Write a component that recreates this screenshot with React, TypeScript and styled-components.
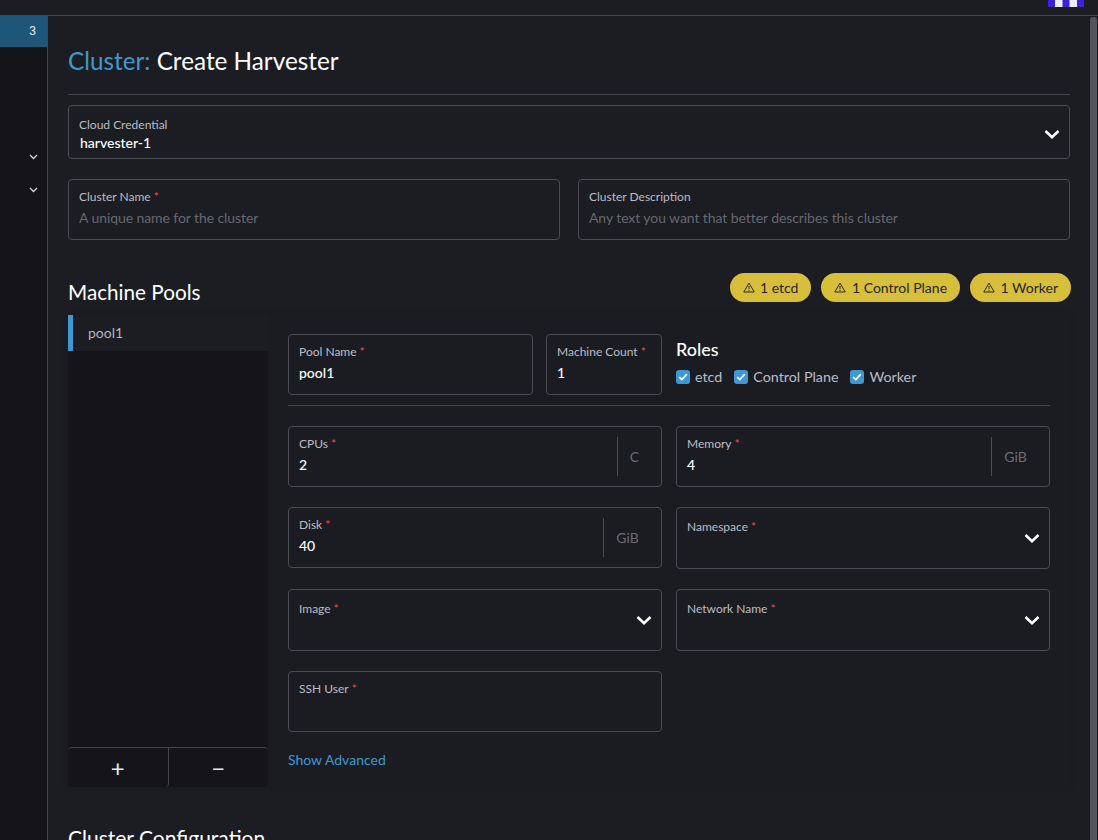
import React from "react";
import styled, { createGlobalStyle } from "styled-components";

const Global = createGlobalStyle`
  html, body { margin: 0; padding: 0; height: 840px; overflow: hidden; background: #1b1d22; }
  body { font-family: Lato, "Open Sans", sans-serif; color: #fff; }
  * { box-sizing: border-box; }
`;

const Page = styled.div`
  width: 1098px; height: 840px; display: flex; flex-direction: column; overflow: hidden; background: #1b1d22;
`;
const Header = styled.header`
  height: 16px; flex: none; display: flex; justify-content: flex-end; align-items: flex-start;
  padding-right: 14px; border-bottom: 1px solid #45464d; background: #1b1d22;
`;
const Avatar = styled.svg`width: 36px; height: 7px; display: block;`;
const Body = styled.div`flex: 1; display: flex; min-height: 0;`;
const Sidebar = styled.nav`
  width: 48px; flex: none; background: #141419; border-right: 1px solid #45464d;
  display: flex; flex-direction: column;
`;
const ActiveItem = styled.div`
  height: 31px; background: #1d5679; color: #e8edf2; font: 12px/31px "Liberation Sans", sans-serif;
  text-align: right; padding-right: 11px;
`;
const SideChevrons = styled.div`
  display: flex; flex-direction: column; align-items: flex-end; gap: 27px; padding: 107px 9px 0 0;
`;
const Main = styled.main`flex: 1; min-width: 0; padding: 0 20px; overflow: hidden;`;
const Scrollbar = styled.div`
  width: 8px; flex: none; padding: 1px 1px 0 0; display: flex;
`;
const Thumb = styled.div`flex: 1; background: #53545c; border-radius: 3px 3px 0 0;`;

const Title = styled.h1`
  margin: 0; height: 79px; padding-top: 28px; font-size: 24.3px; line-height: 34px; font-weight: 400;
  border-bottom: 1px solid #45464d; color: #fff;
`;
const TitleLink = styled.span`color: #3d98d3;`;

const Box = styled.div<{ $h: number; $top?: number }>`
  position: relative; height: ${p => p.$h}px; border: 1px solid #4b4c53; border-radius: 4px;
  padding: ${p => p.$top ?? 10}px 10px 0; display: flex; flex-direction: column; min-width: 0;
  background: transparent;
`;
const Label = styled.label`
  font-size: 12px; line-height: 14px; color: #bcbcc4; display: block;
`;
const Req = styled.span`color: #f64747; margin-left: 3px; font-size: 12px; line-height: 12px; position: relative; top: 0;`;
const Value = styled.div<{ $indent?: number; $gap?: number }>`
  font-size: 14px; line-height: 20px; margin-top: ${p => p.$gap ?? 4}px; color: #fff; font-weight: 500;
  padding-left: ${p => p.$indent ?? 0}px;
`;
const Placeholder = styled.div`
  font-size: 14px; line-height: 20px; margin-top: 4px; color: #66676f; letter-spacing: -0.08px;
`;
const Addon = styled.div<{ $w: number }>`
  position: absolute; right: 0; top: 10px; height: 39px; width: ${p => p.$w}px; border-left: 1px solid #4b4c53;
  display: flex; align-items: center; justify-content: center; color: #6b6c74; font-size: 14px; padding-right: 10px;
`;
const Chevron = styled.svg<{ $dy?: number }>`
  position: absolute; right: 9px; top: 50%; margin-top: ${p => -6 + (p.$dy ?? 0)}px; width: 16px; height: 12px;
`;

const Credential = styled.div`margin-top: 10px;`;
const TwoUp = styled.div`display: grid; grid-template-columns: 492px 492px; gap: 18px; margin-top: 20px;`;

const PoolsHead = styled.div`
  height: 75px; display: flex; align-items: flex-start; justify-content: space-between; padding-top: 33px;
`;
const H2 = styled.h2`margin: 5px 0 0; font-size: 20.7px; line-height: 28px; font-weight: 400; color: #fff;`;
const Badges = styled.div`display: flex; gap: 10px; margin-right: -1px;`;
const Badge = styled.div`
  height: 29px; padding: 0 13px 0 13px; border-radius: 15px; background: #d8bf3b; color: #26262a; display: flex;
  align-items: center; gap: 5.5px; font-size: 14px;
`;

const Pools = styled.section`display: flex; height: 472px; background: #1b1c21; box-shadow: 0 0 6px rgba(0,0,0,.12);`;
const Tabs = styled.div`
  width: 200px; flex: none; background: #141419; display: flex; flex-direction: column;
  border-radius: 0 0 4px 4px; overflow: hidden;
`;
const Tab = styled.div`
  height: 36px; background: #1b1d22; border-left: 5px solid #3d98d3; padding-left: 15px; line-height: 36px;
  color: #b4b4bc; font-size: 14px;
`;
const TabSpace = styled.div`flex: 1;`;
const TabButtons = styled.div`display: flex; height: 40px; border-top: 1px solid #45464d; border-radius: 4px 4px 0 0;`;
const TabBtn = styled.div<{ $first?: boolean }>`
  flex: 1; display: flex; align-items: center; justify-content: center; color: #e8e8ec; font-size: 24px; line-height: 38px;
  border-right: ${p => (p.$first ? "1px solid #45464d" : "none")};
  border-radius: 0 0 4px 0;
`;
const Form = styled.div`flex: 1; min-width: 0; padding: 19px 20px 0;`;
const TopRow = styled.div`display: grid; grid-template-columns: 245px 116px 1fr; column-gap: 13px;`;
const Roles = styled.div`padding-left: 1px;`;
const RolesTitle = styled.div`font-size: 18px; line-height: 24px; margin-top: 3px; color: #fff; font-weight: 500;`;
const Checks = styled.div`display: flex; gap: 12px; margin-top: 6px;`;
const Check = styled.div`display: flex; align-items: center; gap: 5px; font-size: 14.3px; line-height: 20px; color: #bcbcc4;`;
const Tick = styled.span`
  width: 14px; height: 14px; border-radius: 3px; background: #3d98d3; display: inline-flex; align-items: center; justify-content: center;
`;
const Rule = styled.hr`border: 0; border-top: 1px solid #45464d; margin: 10px 0 20px;`;
const Grid = styled.div`display: grid; grid-template-columns: 374px 374px; column-gap: 14px; row-gap: 20px;`;
const AdvLink = styled.a`display: block; margin-top: 19px; font-size: 14px; line-height: 18px; color: #3d98d3;`;
const ConfigHead = styled.h2`margin: 37px 0 0; font-size: 21px; line-height: 28px; font-weight: 400; color: #fff;`;

const SelectChevron = ({ dy }: { dy?: number }) => (
  <Chevron viewBox="0 0 16 12" fill="none" $dy={dy}>
    <path d="M1.5 3 8 9.2 14.5 3" stroke="#fff" strokeWidth="2.6" />
  </Chevron>
);
const SmallChevron = () => (
  <svg width="9" height="6" viewBox="0 0 9 6" fill="none">
    <path d="M1 1 4.5 4.5 8 1" stroke="#d8d8dc" strokeWidth="1.3" />
  </svg>
);
const Warn = () => (
  <svg width="12" height="11" viewBox="0 0 12 11" fill="none" stroke="#2b2a22" strokeWidth="1">
    <path d="M6 1 11.2 10H.8Z" strokeLinejoin="round" />
    <path d="M6 4v3.2M6 8v.9" />
  </svg>
);
const Role = ({ children }: { children: string }) => (
  <Check>
    <Tick>
      <svg width="10" height="8" viewBox="0 0 10 8" fill="none">
        <path d="M1.2 4.2 3.8 6.6 8.8 1.2" stroke="#fff" strokeWidth="1.7" />
      </svg>
    </Tick>
    {children}
  </Check>
);
const Field = ({ label, req = true }: { label: string; req?: boolean }) => (
  <Label>
    {label}
    {req && <Req>*</Req>}
  </Label>
);

export default function App() {
  return (
    <Page>
      <Global />
      <Header>
        <Avatar viewBox="0 0 36 7">
          <rect width="36" height="7" fill="#3b22d8" />
          <rect x="7" width="7.5" height="7" fill="#ecebf8" />
          <rect x="21.5" width="7.5" height="7" fill="#ecebf8" />
        </Avatar>
      </Header>
      <Body>
        <Sidebar>
          <ActiveItem>3</ActiveItem>
          <SideChevrons>
            <SmallChevron />
            <SmallChevron />
          </SideChevrons>
        </Sidebar>
        <Main>
          <Title>
            <TitleLink>Cluster:</TitleLink> Create Harvester
          </Title>
          <Credential>
            <Box $h={54} $top={12}>
              <Field label="Cloud Credential" req={false} />
              <Value $indent={1} $gap={1}>harvester-1</Value>
              <SelectChevron dy={2} />
            </Box>
          </Credential>
          <TwoUp>
            <Box $h={61}>
              <Field label="Cluster Name" />
              <Placeholder>A unique name for the cluster</Placeholder>
            </Box>
            <Box $h={61}>
              <Field label="Cluster Description" req={false} />
              <Placeholder>Any text you want that better describes this cluster</Placeholder>
            </Box>
          </TwoUp>
          <PoolsHead>
            <H2>Machine Pools</H2>
            <Badges>
              <Badge><Warn />1 etcd</Badge>
              <Badge><Warn />1 Control Plane</Badge>
              <Badge><Warn />1 Worker</Badge>
            </Badges>
          </PoolsHead>
          <Pools>
            <Tabs>
              <Tab>pool1</Tab>
              <TabSpace />
              <TabButtons>
                <TabBtn $first>+</TabBtn>
                <TabBtn>−</TabBtn>
              </TabButtons>
            </Tabs>
            <Form>
              <TopRow>
                <Box $h={61}>
                  <Field label="Pool Name" />
                  <Value>pool1</Value>
                </Box>
                <Box $h={61}>
                  <Field label="Machine Count" />
                  <Value>1</Value>
                </Box>
                <Roles>
                  <RolesTitle>Roles</RolesTitle>
                  <Checks>
                    <Role>etcd</Role>
                    <Role>Control Plane</Role>
                    <Role>Worker</Role>
                  </Checks>
                </Roles>
              </TopRow>
              <Rule />
              <Grid>
                <Box $h={61}>
                  <Field label="CPUs" />
                  <Value>2</Value>
                  <Addon $w={44}>C</Addon>
                </Box>
                <Box $h={61}>
                  <Field label="Memory" />
                  <Value>4</Value>
                  <Addon $w={58}>GiB</Addon>
                </Box>
                <Box $h={61}>
                  <Field label="Disk" />
                  <Value>40</Value>
                  <Addon $w={58}>GiB</Addon>
                </Box>
                <Box $h={62} $top={12}>
                  <Field label="Namespace" />
                  <SelectChevron />
                </Box>
                <Box $h={62} $top={12}>
                  <Field label="Image" />
                  <SelectChevron />
                </Box>
                <Box $h={62} $top={12}>
                  <Field label="Network Name" />
                  <SelectChevron />
                </Box>
                <Box $h={61}>
                  <Field label="SSH User" />
                </Box>
              </Grid>
              <AdvLink>Show Advanced</AdvLink>
            </Form>
          </Pools>
          <ConfigHead>Cluster Configuration</ConfigHead>
        </Main>
        <Scrollbar><Thumb /></Scrollbar>
      </Body>
    </Page>
  );
}
